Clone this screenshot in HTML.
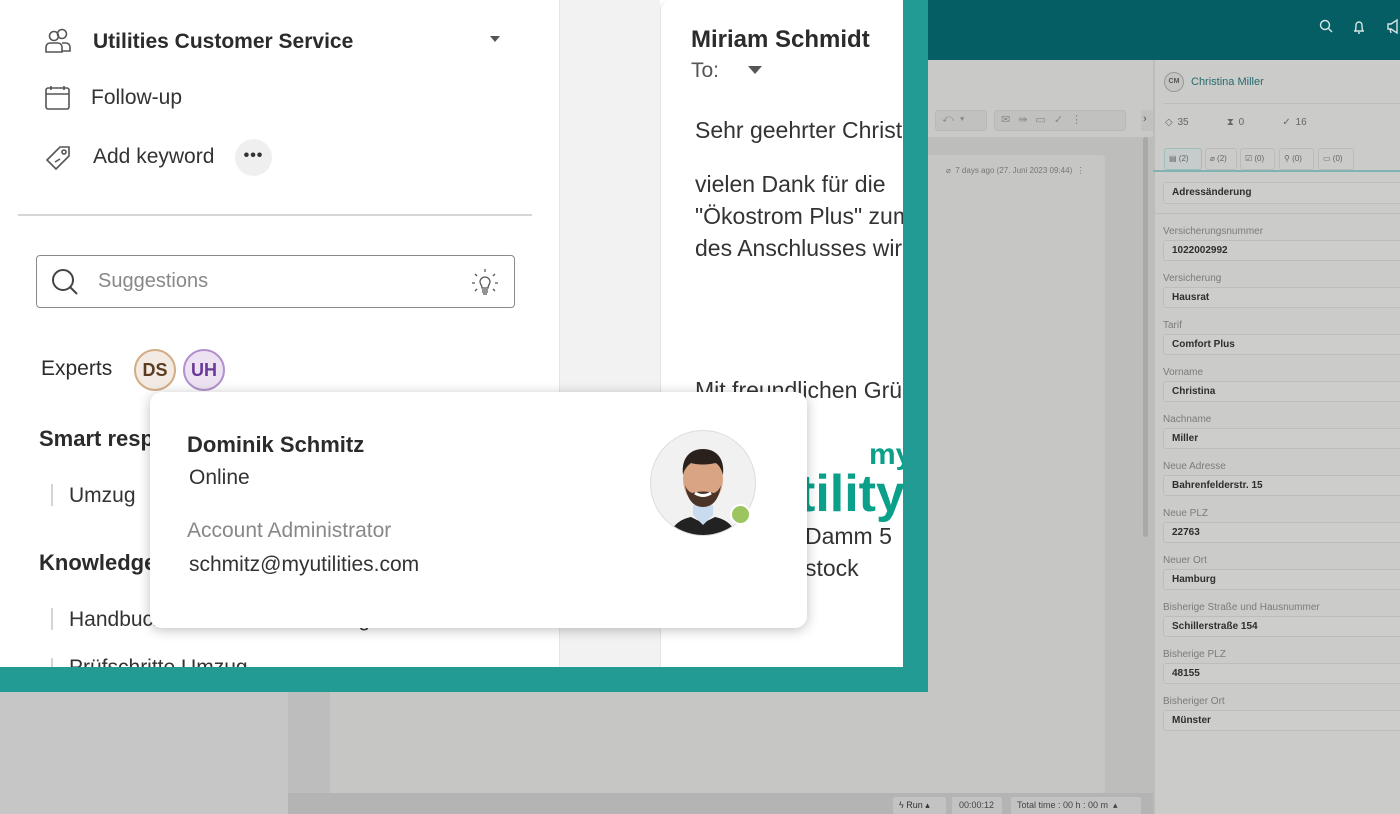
<!DOCTYPE html>
<html><head><meta charset="utf-8"><style>
*{margin:0;padding:0;box-sizing:border-box}
body{width:1400px;height:814px;overflow:hidden;position:relative;background:#c7c7c5;font-family:"Liberation Sans",sans-serif}
.a{position:absolute}
.lbl{position:absolute;left:1163px;font-size:10px;color:#7b7b7b}
.fld{position:absolute;left:1163px;width:260px;height:21px;background:#cdcdcb;border:1px solid #bdbdbb;border-radius:3px;font-size:10px;font-weight:bold;color:#2e2e2e;padding:4px 8px}
</style></head><body>
<div class="a" style="left:0;top:0;width:1400px;height:60px;background:#065e65"></div>
<svg class="a" style="left:1318px;top:18px" width="82" height="18" viewBox="0 0 82 18" fill="none" stroke="#d8e6e6" stroke-width="1.4"><circle cx="7" cy="7" r="4.5"/><path d="M10.5 10.5L14 14"/><path d="M36 13h10M37 13c1-1 1-3 1-6a3 3 0 016 0c0 3 0 5 1 6M40 15h2"/><path d="M70 6h3l6-4v13l-6-4h-3zM72 11l1 4"/></svg>
<div class="a" style="left:0;top:692px;width:288px;height:122px;background:#c6c6c6"></div>
<div class="a" style="left:288px;top:692px;width:42px;height:101px;background:#bdbdbd"></div>
<div class="a" style="left:928px;top:60px;width:225px;height:77px;background:#c9c9c7"></div>
<div class="a" style="left:928px;top:137px;width:225px;height:656px;background:#bdbdbc"></div>
<div class="a" style="left:330px;top:155px;width:775px;height:638px;background:#c6c6c4;border-radius:4px"></div>
<div class="a" style="left:1143px;top:137px;width:5px;height:400px;background:#a9a9a9;border-radius:3px"></div>
<div class="a" style="left:288px;top:793px;width:865px;height:21px;background:#b4b4b4"></div>
<div class="a" style="left:893px;top:797px;width:53px;height:17px;background:#c3c3c3;border-radius:2px;font-size:9px;color:#333;padding:3px 6px">ϟ Run ▴</div>
<div class="a" style="left:952px;top:797px;width:50px;height:17px;background:#c3c3c3;border-radius:2px;font-size:9px;color:#444;padding:3px 7px">00:00:12</div>
<div class="a" style="left:1011px;top:797px;width:130px;height:17px;background:#c3c3c3;border-radius:2px;font-size:9px;color:#444;padding:3px 6px">Total time : 00 h : 00 m &nbsp;▴</div>
<div class="a" style="left:935px;top:110px;width:52px;height:21px;background:#c1c1bf;border:1px solid #b8b8b6;border-radius:3px;font-size:11px;color:#888;padding:2px 6px">⤺ &nbsp;▾</div>
<div class="a" style="left:994px;top:110px;width:132px;height:21px;background:#c1c1bf;border:1px solid #b8b8b6;border-radius:3px;font-size:11px;color:#888;padding:2px 6px;letter-spacing:8px">✉⇛▭✓⋮</div>
<div class="a" style="left:1141px;top:110px;width:12px;height:21px;background:#c1c1bf;font-size:11px;color:#555;padding:3px 2px">›</div>
<div class="a" style="left:946px;top:166px;font-size:8px;color:#777">⌀ &nbsp;7 days ago (27. Juni 2023 09:44) &nbsp;⋮</div>
<div class="a" style="left:1153px;top:60px;width:247px;height:754px;background:#cbcbc9;border-left:2px solid #bcbcbb"></div>
<div class="a" style="left:1164px;top:72px;width:20px;height:20px;border-radius:50%;border:1px solid #999;background:#c4c4c2;font-size:7px;font-weight:bold;color:#555;text-align:center;line-height:18px">CM</div>
<div class="a" style="left:1191px;top:76px;font-size:11px;color:#266a6e">Christina Miller</div>
<div class="a" style="left:1163px;top:103px;width:237px;height:1px;background:#bdbdbb"></div>
<div class="a" style="left:1165px;top:117px;font-size:10px;color:#666;word-spacing:2px">◇ 35 &nbsp;&nbsp;&nbsp;&nbsp;&nbsp;&nbsp;&nbsp;⧗ 0 &nbsp;&nbsp;&nbsp;&nbsp;&nbsp;&nbsp;&nbsp;✓ 16</div>
<div class="a" style="left:1164px;top:148px;width:38px;height:22px;border:1px solid #9dbcbc;background:#c6cbcb;border-radius:3px;font-size:8px;color:#666;padding:5px 4px">▤ (2)</div>
<div class="a" style="left:1205px;top:148px;width:32px;height:22px;border:1px solid #bbb;border-radius:3px;font-size:8px;color:#666;padding:5px 4px">⌀ (2)</div>
<div class="a" style="left:1240px;top:148px;width:35px;height:22px;border:1px solid #bbb;border-radius:3px;font-size:8px;color:#666;padding:5px 4px">☑ (0)</div>
<div class="a" style="left:1279px;top:148px;width:35px;height:22px;border:1px solid #bbb;border-radius:3px;font-size:8px;color:#666;padding:5px 4px">⚲ (0)</div>
<div class="a" style="left:1318px;top:148px;width:36px;height:22px;border:1px solid #bbb;border-radius:3px;font-size:8px;color:#666;padding:5px 4px">▭ (0)</div>
<div class="a" style="left:1153px;top:170px;width:247px;height:2px;background:#7fb3b3"></div>
<div class="fld" style="top:182px;height:22px">Adressänderung</div>
<div class="a" style="left:1155px;top:213px;width:245px;height:1px;background:#bdbdbb"></div>
<div class="lbl" style="top:226px">Versicherungsnummer</div><div class="fld" style="top:240px">1022002992</div>
<div class="lbl" style="top:273px">Versicherung</div><div class="fld" style="top:287px">Hausrat</div>
<div class="lbl" style="top:320px">Tarif</div><div class="fld" style="top:334px">Comfort Plus</div>
<div class="lbl" style="top:367px">Vorname</div><div class="fld" style="top:381px">Christina</div>
<div class="lbl" style="top:414px">Nachname</div><div class="fld" style="top:428px">Miller</div>
<div class="lbl" style="top:461px">Neue Adresse</div><div class="fld" style="top:475px">Bahrenfelderstr. 15</div>
<div class="lbl" style="top:508px">Neue PLZ</div><div class="fld" style="top:522px">22763</div>
<div class="lbl" style="top:555px">Neuer Ort</div><div class="fld" style="top:569px">Hamburg</div>
<div class="lbl" style="top:602px">Bisherige Straße und Hausnummer</div><div class="fld" style="top:616px">Schillerstraße 154</div>
<div class="lbl" style="top:649px">Bisherige PLZ</div><div class="fld" style="top:663px">48155</div>
<div class="lbl" style="top:696px">Bisheriger Ort</div><div class="fld" style="top:710px">Münster</div>

<div class="a" style="left:0;top:0;width:928px;height:692px;background:#219b94"></div>
<div class="a" style="left:0;top:0;width:903px;height:667px;background:#fff;overflow:hidden">
  <div class="a" style="left:559px;top:0;width:101px;height:667px;background:#f2f2f2;border-left:1px solid #e6e6e6"></div>
  <div class="a" style="left:660px;top:0;width:260px;height:667px;background:#fff;border-left:1px solid #e3e3e3;border-top-left-radius:10px"></div>
  <svg class="a" style="left:44px;top:28px" width="28" height="26" viewBox="0 0 28 26" fill="none" stroke="#555" stroke-width="1.6"><circle cx="10" cy="8" r="4.5"/><circle cx="18" cy="6" r="4.5"/><path d="M2 24v-5a4 4 0 014-4h8a4 4 0 014 4v5zM18 15h4a4 4 0 014 4v4h-8"/></svg>
  <div class="a" style="left:93px;top:30px;font-size:21px;font-weight:bold;color:#2b2b2b">Utilities Customer Service</div>
  <div class="a" style="left:490px;top:36px;width:0;height:0;border-left:5px solid transparent;border-right:5px solid transparent;border-top:6px solid #555"></div>
  <svg class="a" style="left:44px;top:85px" width="28" height="26" viewBox="0 0 28 26" fill="none" stroke="#555" stroke-width="1.6"><rect x="2" y="3" width="23" height="21" rx="2"/><path d="M2 9h23M7 1v4M20 1v4"/></svg>
  <div class="a" style="left:91px;top:86px;font-size:21px;color:#333">Follow-up</div>
  <svg class="a" style="left:44px;top:142px" width="30" height="30" viewBox="0 0 30 30" fill="none" stroke="#555" stroke-width="1.6"><path d="M3 18L16 5h9v9L12 27z"/><circle cx="20" cy="10" r="2"/><path d="M11 20l5-3"/></svg>
  <div class="a" style="left:93px;top:145px;font-size:21px;color:#333">Add keyword</div>
  <div class="a" style="left:235px;top:139px;width:37px;height:37px;border-radius:50%;background:#efefef;text-align:center;font-size:16px;font-weight:bold;color:#333;line-height:34px;letter-spacing:1px">•••</div>
  <div class="a" style="left:18px;top:214px;width:514px;height:2px;background:#d6d6d6"></div>
  <div class="a" style="left:36px;top:255px;width:479px;height:53px;border:1.5px solid #8a8a8a;border-radius:4px"></div>
  <svg class="a" style="left:51px;top:268px" width="30" height="30" viewBox="0 0 30 30" fill="none" stroke="#444" stroke-width="2"><circle cx="12" cy="12" r="10"/><path d="M19.5 19.5L26 26"/></svg>
  <div class="a" style="left:98px;top:270px;font-size:20px;color:#888">Suggestions</div>
  <svg class="a" style="left:470px;top:267px" width="30" height="30" viewBox="0 0 30 30" fill="none" stroke="#555" stroke-width="1.3"><path d="M10 15a5 5 0 1110 0c0 2-2 3-2 6h-6c0-3-2-4-2-6zM12 23h6M12 25h6M13 27h4M15 2v3M5 7l2 2M25 7l-2 2M2 16h3M25 16h3M5 24l2-2M25 24l-2-2"/></svg>
  <div class="a" style="left:41px;top:357px;font-size:21px;color:#2b2b2b">Experts</div>
  <div class="a" style="left:134px;top:349px;width:42px;height:42px;border-radius:50%;background:#f3ebe3;border:2px solid #d2ad85;font-size:18px;font-weight:bold;color:#5a3c22;text-align:center;line-height:38px">DS</div>
  <div class="a" style="left:183px;top:349px;width:42px;height:42px;border-radius:50%;background:#ece2f2;border:2px solid #b190cd;font-size:18px;font-weight:bold;color:#6a3a96;text-align:center;line-height:38px">UH</div>
  <div class="a" style="left:39px;top:426px;font-size:22px;font-weight:bold;color:#2b2b2b">Smart responses</div>
  <div class="a" style="left:51px;top:484px;width:2px;height:22px;background:#d4d4d4"></div>
  <div class="a" style="left:69px;top:484px;font-size:21px;color:#333">Umzug</div>
  <div class="a" style="left:39px;top:550px;font-size:22px;font-weight:bold;color:#2b2b2b">Knowledge</div>
  <div class="a" style="left:51px;top:608px;width:2px;height:22px;background:#d4d4d4"></div>
  <div class="a" style="left:69px;top:608px;font-size:21px;color:#333">Handbuch Software und Sonstiges</div>
  <div class="a" style="left:51px;top:658px;width:2px;height:22px;background:#d4d4d4"></div>
  <div class="a" style="left:69px;top:656px;font-size:21px;color:#333">Prüfschritte Umzug</div>
  <div class="a" style="left:691px;top:26px;font-size:24px;font-weight:bold;color:#2b2b2b;white-space:nowrap">Miriam Schmidt</div>
  <div class="a" style="left:691px;top:59px;font-size:21px;color:#555">To:</div>
  <div class="a" style="left:748px;top:66px;width:0;height:0;border-left:7px solid transparent;border-right:7px solid transparent;border-top:8px solid #555"></div>
  <div class="a" style="left:695px;top:114px;font-size:23px;color:#333;white-space:nowrap;line-height:32px">Sehr geehrter Christina Miller,</div>
  <div class="a" style="left:695px;top:168px;font-size:23px;color:#333;white-space:nowrap;line-height:32px">vielen Dank für die<br>"Ökostrom Plus" zum<br>des Anschlusses wird</div>
  <div class="a" style="left:695px;top:374px;font-size:23px;color:#333;white-space:nowrap;line-height:32px">Mit freundlichen Grüßen</div>
  <div class="a" style="left:869px;top:438px;font-size:30px;font-weight:bold;color:#0aa08a">my</div>
  <div class="a" style="left:798px;top:464px;font-size:52px;font-weight:bold;color:#0aa08a;white-space:nowrap">tility</div>
  <div class="a" style="left:805px;top:520px;font-size:23px;color:#333;white-space:nowrap;line-height:32px">Damm 5</div>
  <div class="a" style="left:805px;top:552px;font-size:23px;color:#333;white-space:nowrap;line-height:32px">stock</div>
  <div class="a" style="left:150px;top:392px;width:657px;height:236px;background:#fff;border-radius:12px;box-shadow:0 2px 12px rgba(0,0,0,.25)">
    <div class="a" style="left:37px;top:40px;font-size:22px;font-weight:bold;color:#2b2b2b">Dominik Schmitz</div>
    <div class="a" style="left:39px;top:74px;font-size:21px;color:#333">Online</div>
    <div class="a" style="left:37px;top:127px;font-size:21px;color:#888">Account Administrator</div>
    <div class="a" style="left:39px;top:161px;font-size:21px;color:#333">schmitz@myutilities.com</div>
    <svg class="a" style="left:499px;top:37px" width="110" height="110" viewBox="0 0 110 110">
      <defs><clipPath id="c"><circle cx="54" cy="54" r="52"/></clipPath></defs>
      <circle cx="54" cy="54" r="52.5" fill="#f1f1f1" stroke="#ddd"/>
      <g clip-path="url(#c)">
        <path d="M20 110c2-14 12-20 22-22l12 6 12-6c10 2 20 8 22 22z" fill="#222"/>
        <path d="M44 86l10 10 10-10v-10H44z" fill="#c9dcef"/>
        <ellipse cx="54" cy="50" rx="20" ry="26" fill="#d9a483"/>
        <path d="M34 46c-2-18 8-26 20-26s22 8 20 26c-2-8-6-12-8-12-6 2-18 2-24 0-2 2-6 4-8 12z" fill="#2b211c"/>
        <path d="M36 56c2 14 8 22 18 22s16-8 18-22c-2 6-6 8-8 8-4-2-16-2-20 0-2 0-6-2-8-8z" fill="#4a3528"/>
        <path d="M46 64q8 5 16 0" stroke="#fff" stroke-width="3" fill="none"/>
      </g>
    </svg>
    <div class="a" style="left:580px;top:112px;width:21px;height:21px;border-radius:50%;background:#9cc55f;border:2px solid #fff"></div>
  </div>
</div>
</body></html>
